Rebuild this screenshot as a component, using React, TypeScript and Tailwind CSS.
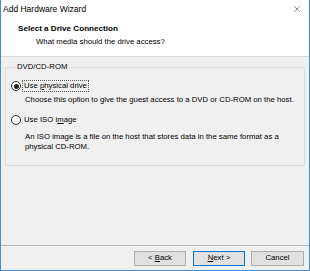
import { X } from 'lucide-react';

// Add Hardware Wizard – drive connection step
export default function App() {
  return (
    <div
      className="w-[310px] h-[271px] flex flex-col bg-[#f0f0f0] border-x border-b border-[#3d8fd9] text-[7.75px] leading-[10px] text-black"
      style={{ fontFamily: '"Liberation Sans", Arial, sans-serif' }}
    >
      {/* Title bar */}
      <div className="h-[18px] bg-white flex items-center justify-between pl-[2px] pr-[7px]">
        <span className="text-[8.5px]">Add Hardware Wizard</span>
        <X size={10} strokeWidth={1.3} color="#222" />
      </div>

      {/* Header */}
      <div className="h-[39px] bg-white border-b border-[#dadada] pl-[17px] pt-[6px]">
        <p className="font-bold text-[8.1px]">Select a Drive Connection</p>
        <p className="pl-[18px] mt-[3px]">What media should the drive access?</p>
      </div>

      {/* Group */}
      <fieldset className="mx-[4px] mt-[5px] h-[104px] border border-[#dcdcdc] px-[5px]">
        <legend className="ml-[5px] px-[1px]">DVD/CD-ROM</legend>

        <div className="flex items-center gap-[2px] mt-[9px]">
          <span className="w-[10px] h-[10px] rounded-full border border-[#333] bg-white flex items-center justify-center">
            <span className="w-[5px] h-[5px] rounded-full bg-[#222]" />
          </span>
          <span className="outline outline-1 outline-dotted outline-[#555] px-[1px]">
            Use <u>p</u>hysical drive
          </span>
        </div>
        <p className="pl-[14px] mt-[4px]">
          Choose this option to give the guest access to a DVD or CD-ROM on the host.
        </p>

        <div className="flex items-center gap-[2px] mt-[10px]">
          <span className="w-[10px] h-[10px] rounded-full border border-[#333] bg-white" />
          <span className="px-[1px]">
            Use ISO i<u>m</u>age
          </span>
        </div>
        <p className="pl-[14px] mt-[7px] pr-[10px]">
          An ISO image is a file on the host that stores data in the same format as a physical CD-ROM.
        </p>
      </fieldset>

      <div className="flex-1" />

      {/* Footer */}
      <div className="border-t border-[#b9b9b9] h-[25px] flex items-center justify-end gap-[6px] pr-[5px]">
        <button className="w-[52px] h-[15px] bg-[#e1e1e1] border border-[#adadad]">
          &lt; <u>B</u>ack
        </button>
        <button className="w-[52px] h-[15px] bg-[#e1e1e1] border border-[#0078d7] ml-[1px]">
          <u>N</u>ext &gt;
        </button>
        <button className="w-[53px] h-[15px] bg-[#e1e1e1] border border-[#adadad]">
          Cancel
        </button>
      </div>
    </div>
  );
}
